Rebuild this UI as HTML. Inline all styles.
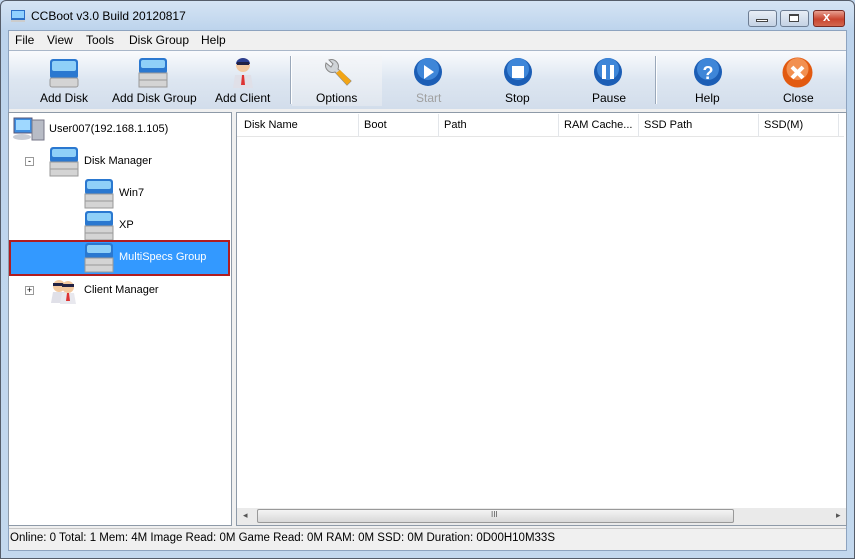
<!DOCTYPE html>
<html><head><meta charset="utf-8"><style>
*{margin:0;padding:0;box-sizing:border-box}
body{width:855px;height:559px;overflow:hidden;font-family:"Liberation Sans",sans-serif;font-size:12px;color:#000;background:#c4d8ee;position:relative}
.abs{position:absolute}
#frame{left:0;top:0;width:855px;height:559px;border:1px solid #555d6a;border-radius:6px 6px 0 0;background:linear-gradient(#d5e4f4,#bcd3ec 30px,#c3d8ee)}
#title{left:31px;top:9px;font-size:12px}
#client{left:8px;top:30px;width:839px;height:521px;background:#f0f0f0;border:1px solid #8da3bf}
.menu span{position:absolute;top:33px;font-size:12px}
#tb{left:9px;top:50px;width:837px;height:59px;background:linear-gradient(#fafbfd,#dde6f1 50%,#d2ddeb);border-top:1px solid #a9b7c9}
.tbl{position:absolute;top:91px;font-size:12px;text-align:center}
.sep{position:absolute;top:56px;width:1px;height:48px;background:#9aa8ba;box-shadow:1px 0 #fff}
.panel{background:#fff;border:1px solid #8e9aa8}
.hdr{position:absolute;top:119px;font-size:11px}
.hsep{position:absolute;top:114px;width:1px;height:23px;background:#e3e6ea}
.tree{position:absolute;font-size:11px}
</style></head><body>
<div id="frame" class="abs"></div>
<svg class="abs" style="left:10px;top:8px" width="16" height="16"><rect x="1" y="2" width="14" height="12" fill="#2a6fc8"/><rect x="2" y="3" width="12" height="7" fill="#8fd0ff"/><rect x="1" y="12" width="14" height="2" fill="#ccc"/></svg>
<div id="title" class="abs">CCBoot v3.0 Build 20120817</div>
<div class="abs" style="left:748px;top:10px;width:29px;height:17px;border:1px solid #6d7d93;border-radius:3px;background:linear-gradient(#e8eef6,#c4d2e4)"></div>
<div class="abs" style="left:756px;top:19px;width:12px;height:3px;border:1px solid #444;background:#fff"></div>
<div class="abs" style="left:780px;top:10px;width:29px;height:17px;border:1px solid #6d7d93;border-radius:3px;background:linear-gradient(#e8eef6,#c4d2e4)"></div>
<div class="abs" style="left:789px;top:14px;width:10px;height:8px;border:1px solid #444;border-top-width:2px;background:#fff"></div>
<div class="abs" style="left:813px;top:10px;width:32px;height:17px;border:1px solid #7a2a22;border-radius:3px;background:linear-gradient(#e8a092,#c9452f 55%,#d2664e)"></div>
<div class="abs" style="left:823px;top:9px;color:#fff;font-weight:bold;font-size:13px">x</div>
<div id="client" class="abs"></div>
<div class="menu"><span style="left:15px">File</span><span style="left:47px">View</span><span style="left:86px">Tools</span><span style="left:129px">Disk Group</span><span style="left:201px">Help</span></div>
<div id="tb" class="abs"></div>
<svg class="abs" style="left:49px;top:57px" width="30" height="32"><rect x="1" y="2" width="28" height="20" rx="3" fill="#2a78d0"/><rect x="3" y="4" width="24" height="10" rx="2" fill="#8fd0f8"/><rect x="1" y="21" width="28" height="9" rx="2" fill="#d4d4d4" stroke="#999"/></svg>
<svg class="abs" style="left:138px;top:57px" width="30" height="32"><rect x="1" y="1" width="28" height="16" rx="3" fill="#2a78d0"/><rect x="3" y="3" width="24" height="8" rx="2" fill="#8fd0f8"/><rect x="1" y="16" width="28" height="7" fill="#d4d4d4" stroke="#999"/><rect x="1" y="23" width="28" height="7" fill="#d4d4d4" stroke="#999"/></svg>
<svg class="abs" style="left:229px;top:56px" width="28" height="34"><circle cx="14" cy="9" r="7" fill="#f3c9a0"/><path d="M7 8a7 6 0 0 1 14 0z" fill="#2c3f8f"/><rect x="8" y="6" width="12" height="3" fill="#224"/><path d="M4 32l2-13h16l2 13z" fill="#e0e0e8"/><path d="M13 19h2l1 10h-4z" fill="#d33"/></svg>
<svg class="abs" style="left:413px;top:57px" width="30" height="30"><circle cx="15" cy="15" r="14" fill="#1c5eb5"/><circle cx="15" cy="12" r="11" fill="#3e86d8"/><path d="M11 8l10 7-10 7z" fill="#fff"/></svg>
<svg class="abs" style="left:503px;top:57px" width="30" height="30"><circle cx="15" cy="15" r="14" fill="#1c5eb5"/><circle cx="15" cy="12" r="11" fill="#3e86d8"/><rect x="9" y="9" width="12" height="12" fill="#fff"/></svg>
<svg class="abs" style="left:593px;top:57px" width="30" height="30"><circle cx="15" cy="15" r="14" fill="#1c5eb5"/><circle cx="15" cy="12" r="11" fill="#3e86d8"/><rect x="9" y="8" width="4" height="14" fill="#fff"/><rect x="17" y="8" width="4" height="14" fill="#fff"/></svg>
<svg class="abs" style="left:693px;top:57px" width="30" height="30"><circle cx="15" cy="15" r="14" fill="#1c5eb5"/><circle cx="15" cy="12" r="11" fill="#3e86d8"/><text x="15" y="22" font-family="Liberation Sans" font-weight="bold" font-size="18" fill="#fff" text-anchor="middle">?</text></svg>
<svg class="abs" style="left:782px;top:57px" width="31" height="31"><circle cx="15.5" cy="15.5" r="15" fill="#e25a10"/><circle cx="15.5" cy="12" r="11" fill="#f29050"/><path d="M10 10l11 11M21 10L10 21" stroke="#fff" stroke-width="4"/></svg>
<div class="tbl" style="left:40px">Add Disk</div>
<div class="tbl" style="left:112px">Add Disk Group</div>
<div class="tbl" style="left:215px">Add Client</div>
<div class="sep" style="left:290px"></div>
<div class="abs" style="left:292px;top:56px;width:90px;height:50px;background:linear-gradient(#f4f6f9,#dfe6ef)"></div>
<svg class="abs" style="left:322px;top:57px" width="32" height="32"><path d="M4 6a7 7 0 0 0 9 9l12 13 4-4-13-12a7 7 0 0 0-9-9l4 4-2 3z" fill="#d0d4d8" stroke="#888"/><path d="M14 16l11 12 4-4-11-11z" fill="#f2a516"/></svg>
<div class="tbl" style="left:316px">Options</div>
<div class="tbl" style="left:416px;color:#a0a0a0">Start</div>
<div class="tbl" style="left:505px">Stop</div>
<div class="tbl" style="left:592px">Pause</div>
<div class="sep" style="left:655px"></div>
<div class="tbl" style="left:695px">Help</div>
<div class="tbl" style="left:783px">Close</div>
<div class="abs panel" style="left:8px;top:112px;width:224px;height:414px"></div>
<svg class="abs" style="left:12px;top:114px" width="34" height="28"><rect x="2" y="4" width="18" height="15" fill="#3d8de0" stroke="#557"/><rect x="4" y="6" width="14" height="10" fill="#9fd8ff"/><rect x="20" y="6" width="12" height="20" fill="#b8bcc6" stroke="#778"/><ellipse cx="10" cy="23" rx="9" ry="3" fill="#c8ccd4"/></svg>
<div class="tree" style="left:49px;top:123px">User007(192.168.1.105)</div>
<div class="abs" style="left:25px;top:157px;width:9px;height:9px;border:1px solid #999;font-size:9px;line-height:6px;text-align:center;background:#fff">-</div>
<svg class="abs" style="left:49px;top:146px" width="30" height="32"><rect x="1" y="1" width="28" height="16" rx="3" fill="#2a78d0"/><rect x="3" y="3" width="24" height="8" rx="2" fill="#8fd0f8"/><rect x="1" y="16" width="28" height="7" fill="#d4d4d4" stroke="#999"/><rect x="1" y="23" width="28" height="7" fill="#d4d4d4" stroke="#999"/></svg>
<div class="tree" style="left:84px;top:155px">Disk Manager</div>
<svg class="abs" style="left:84px;top:178px" width="30" height="32"><rect x="1" y="1" width="28" height="16" rx="3" fill="#2a78d0"/><rect x="3" y="3" width="24" height="8" rx="2" fill="#8fd0f8"/><rect x="1" y="16" width="28" height="7" fill="#d4d4d4" stroke="#999"/><rect x="1" y="23" width="28" height="7" fill="#d4d4d4" stroke="#999"/></svg>
<div class="tree" style="left:119px;top:187px">Win7</div>
<svg class="abs" style="left:84px;top:210px" width="30" height="32"><rect x="1" y="1" width="28" height="16" rx="3" fill="#2a78d0"/><rect x="3" y="3" width="24" height="8" rx="2" fill="#8fd0f8"/><rect x="1" y="16" width="28" height="7" fill="#d4d4d4" stroke="#999"/><rect x="1" y="23" width="28" height="7" fill="#d4d4d4" stroke="#999"/></svg>
<div class="tree" style="left:119px;top:219px">XP</div>
<div class="abs" style="left:9px;top:240px;width:221px;height:36px;background:#3399ff;border:2px solid #b01c20"></div>
<svg class="abs" style="left:84px;top:242px" width="30" height="32"><rect x="1" y="1" width="28" height="16" rx="3" fill="#2a78d0"/><rect x="3" y="3" width="24" height="8" rx="2" fill="#8fd0f8"/><rect x="1" y="16" width="28" height="7" fill="#d4d4d4" stroke="#999"/><rect x="1" y="23" width="28" height="7" fill="#d4d4d4" stroke="#999"/></svg>
<div class="tree" style="left:119px;top:251px;color:#fff">MultiSpecs Group</div>
<div class="abs" style="left:25px;top:286px;width:9px;height:9px;border:1px solid #999;font-size:9px;line-height:7px;text-align:center;background:#fff">+</div>
<svg class="abs" style="left:49px;top:276px" width="30" height="30"><circle cx="10" cy="10" r="6" fill="#f3c9a0"/><rect x="4" y="7" width="12" height="3" fill="#224"/><path d="M2 27l2-11h12l2 11z" fill="#e0e0e8"/><circle cx="19" cy="11" r="6" fill="#f3c9a0"/><rect x="13" y="8" width="12" height="3" fill="#224"/><path d="M11 28l2-11h12l2 11z" fill="#e8e8ee"/><path d="M18 17h2l1 8h-4z" fill="#d33"/></svg>
<div class="tree" style="left:84px;top:284px">Client Manager</div>
<div class="abs panel" style="left:236px;top:112px;width:611px;height:414px"></div>
<div class="abs" style="left:237px;top:136px;width:607px;height:1px;background:#e5e5e5"></div>
<div class="hdr" style="left:244px">Disk Name</div><div class="hsep" style="left:358px"></div>
<div class="hdr" style="left:364px">Boot</div><div class="hsep" style="left:438px"></div>
<div class="hdr" style="left:444px">Path</div><div class="hsep" style="left:558px"></div>
<div class="hdr" style="left:564px">RAM Cache...</div><div class="hsep" style="left:638px"></div>
<div class="hdr" style="left:644px">SSD Path</div><div class="hsep" style="left:758px"></div>
<div class="hdr" style="left:764px">SSD(M)</div><div class="hsep" style="left:838px"></div>
<div class="abs" style="left:237px;top:508px;width:609px;height:17px;background:#eaeaea"></div>
<div class="abs" style="left:243px;top:510px;font-size:9px;color:#555">◂</div>
<div class="abs" style="left:836px;top:510px;font-size:9px;color:#555">▸</div>
<div class="abs" style="left:257px;top:509px;width:477px;height:14px;border:1px solid #999;border-radius:2px;background:linear-gradient(#f4f4f4,#d8d8d8)"></div>
<div class="abs" style="left:491px;top:510px;font-size:8px;color:#555">III</div>
<div class="abs" style="left:9px;top:528px;width:837px;height:1px;background:#c8c8c8"></div>
<div class="abs" style="left:10px;top:532px;font-size:11.5px;letter-spacing:0">Online: 0 Total: 1 Mem: 4M Image Read: 0M Game Read: 0M RAM: 0M SSD: 0M Duration: 0D00H10M33S</div>
</body></html>
